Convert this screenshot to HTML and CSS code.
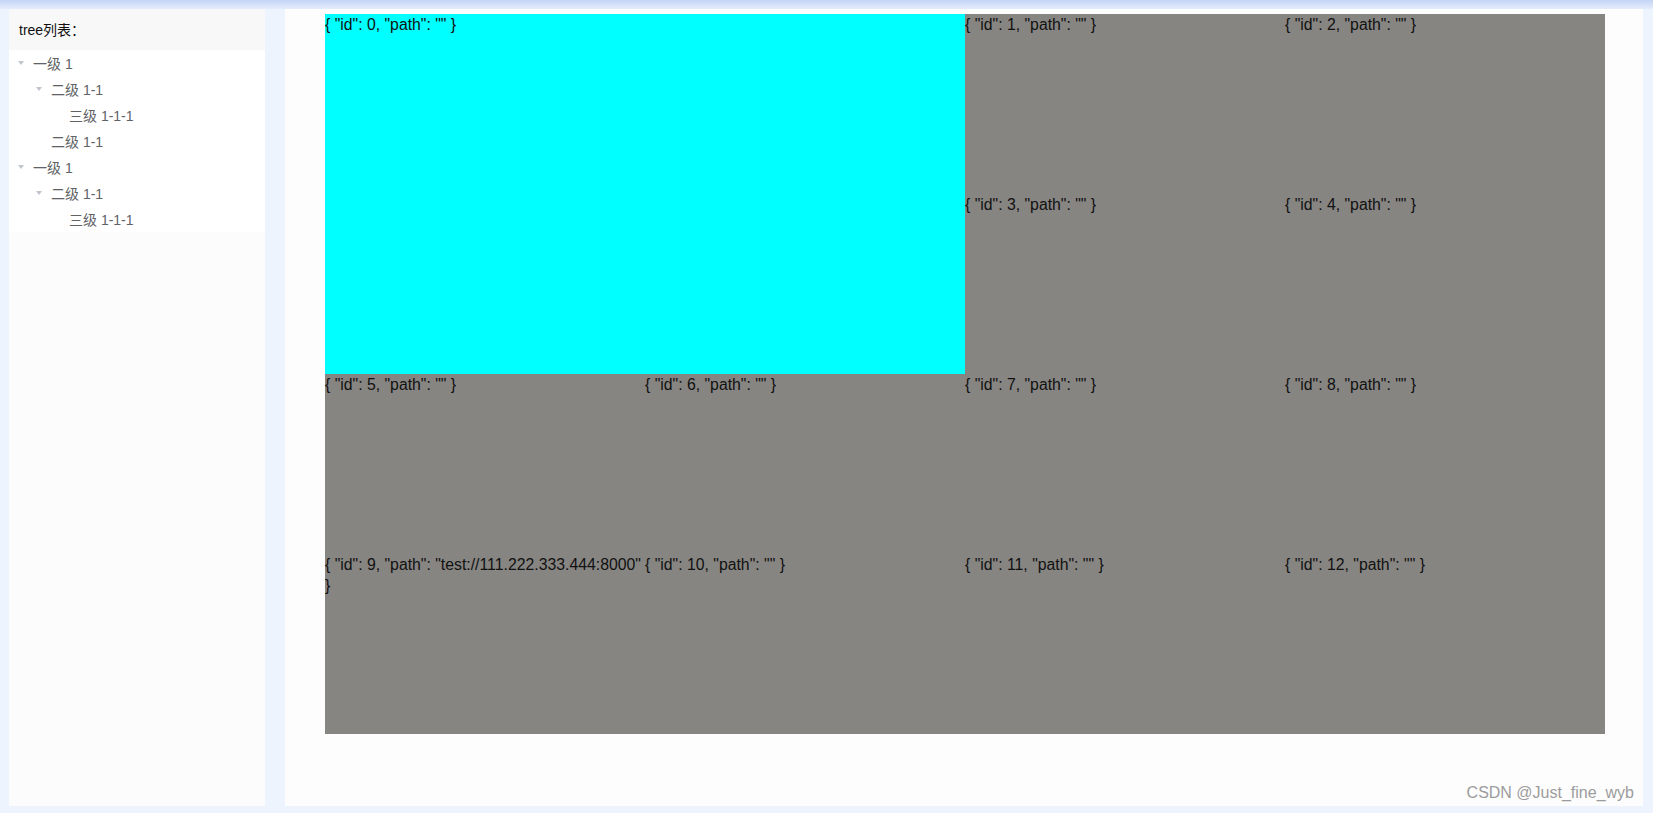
FILE: index.html
```html
<!DOCTYPE html>
<html lang="zh">
<head>
<meta charset="utf-8">
<title>tree</title>
<link rel="stylesheet" href="styles.css">
</head>
<body>
<div class="topband"></div>
<div class="layout">
  <aside class="side">
    <div class="side-head">tree列表：</div>
    <ul class="tree">
      <li class="node lv1"><span class="caret"></span><span class="label">一级 1</span></li>
      <li class="node lv2"><span class="caret"></span><span class="label">二级 1-1</span></li>
      <li class="node lv3"><span class="caret leaf"></span><span class="label">三级 1-1-1</span></li>
      <li class="node lv2"><span class="caret leaf"></span><span class="label">二级 1-1</span></li>
      <li class="node lv1"><span class="caret"></span><span class="label">一级 1</span></li>
      <li class="node lv2"><span class="caret"></span><span class="label">二级 1-1</span></li>
      <li class="node lv3"><span class="caret leaf"></span><span class="label">三级 1-1-1</span></li>
    </ul>
  </aside>
  <main class="main">
    <div class="grid">
      <div class="cell big">{ "id": 0, "path": "" }</div>
      <div class="cell">{ "id": 1, "path": "" }</div>
      <div class="cell">{ "id": 2, "path": "" }</div>
      <div class="cell">{ "id": 3, "path": "" }</div>
      <div class="cell">{ "id": 4, "path": "" }</div>
      <div class="cell">{ "id": 5, "path": "" }</div>
      <div class="cell">{ "id": 6, "path": "" }</div>
      <div class="cell">{ "id": 7, "path": "" }</div>
      <div class="cell">{ "id": 8, "path": "" }</div>
      <div class="cell">{ "id": 9, "path": "test://111.222.333.444:8000" }</div>
      <div class="cell">{ "id": 10, "path": "" }</div>
      <div class="cell">{ "id": 11, "path": "" }</div>
      <div class="cell">{ "id": 12, "path": "" }</div>
    </div>
    <div class="watermark">CSDN @Just_fine_wyb</div>
  </main>
</div>
</body>
</html>
```

FILE: styles.css
```css
html, body {
  margin: 0;
  padding: 0;
}
body {
  width: 1653px;
  height: 813px;
  background: #edf4fd;
  font-family: "Liberation Sans", "Noto Sans CJK SC", sans-serif;
  overflow: hidden;
}
.topband {
  height: 9px;
  background: linear-gradient(#c4d4f6, #e4edfc);
}
.layout {
  display: flex;
  gap: 20px;
  padding: 0 10px 0 9px;
  height: 797px;
}
.side {
  width: 256px;
  flex: none;
  background: #fcfcfc;
  display: flex;
  flex-direction: column;
}
.side-head {
  height: 41px;
  line-height: 41px;
  padding-left: 10px;
  padding-top: 1px;
  box-sizing: border-box;
  background: #f8f8f8;
  color: #111;
  font-size: 14px;
}
.tree {
  list-style: none;
  margin: 0;
  padding: 0;
  background: #ffffff;
}
.node {
  height: 26px;
  display: flex;
  align-items: center;
  font-size: 14px;
  color: #606266;
}
.lv2 { padding-left: 18px; }
.lv3 { padding-left: 36px; }
.caret {
  width: 24px;
  height: 26px;
  flex: none;
  display: flex;
  align-items: center;
  justify-content: center;
}
.caret::before {
  content: "";
  display: block;
  width: 0;
  height: 0;
  border-left: 3.5px solid transparent;
  border-right: 3.5px solid transparent;
  border-top: 4px solid #c0c4cc;
  margin-top: -1px;
}
.caret.leaf::before {
  border-top-color: transparent;
}
.main {
  position: relative;
  flex: 1;
  background: #fdfdfd;
  padding: 5px 0 0 40px;
}
.grid {
  width: 1280px;
  display: grid;
  grid-template-columns: repeat(4, 320px);
  grid-template-rows: repeat(4, 180px);
  background: #878582;
}
.cell {
  font-size: 15.8px;
  line-height: 21px;
  color: #111;
  overflow-wrap: normal;
}
.cell.big {
  grid-column: span 2;
  grid-row: span 2;
  background: #00ffff;
}
.watermark {
  position: absolute;
  right: 9px;
  bottom: 3px;
  font-size: 16px;
  color: #9c9c9c;
  line-height: 20px;
}
```
